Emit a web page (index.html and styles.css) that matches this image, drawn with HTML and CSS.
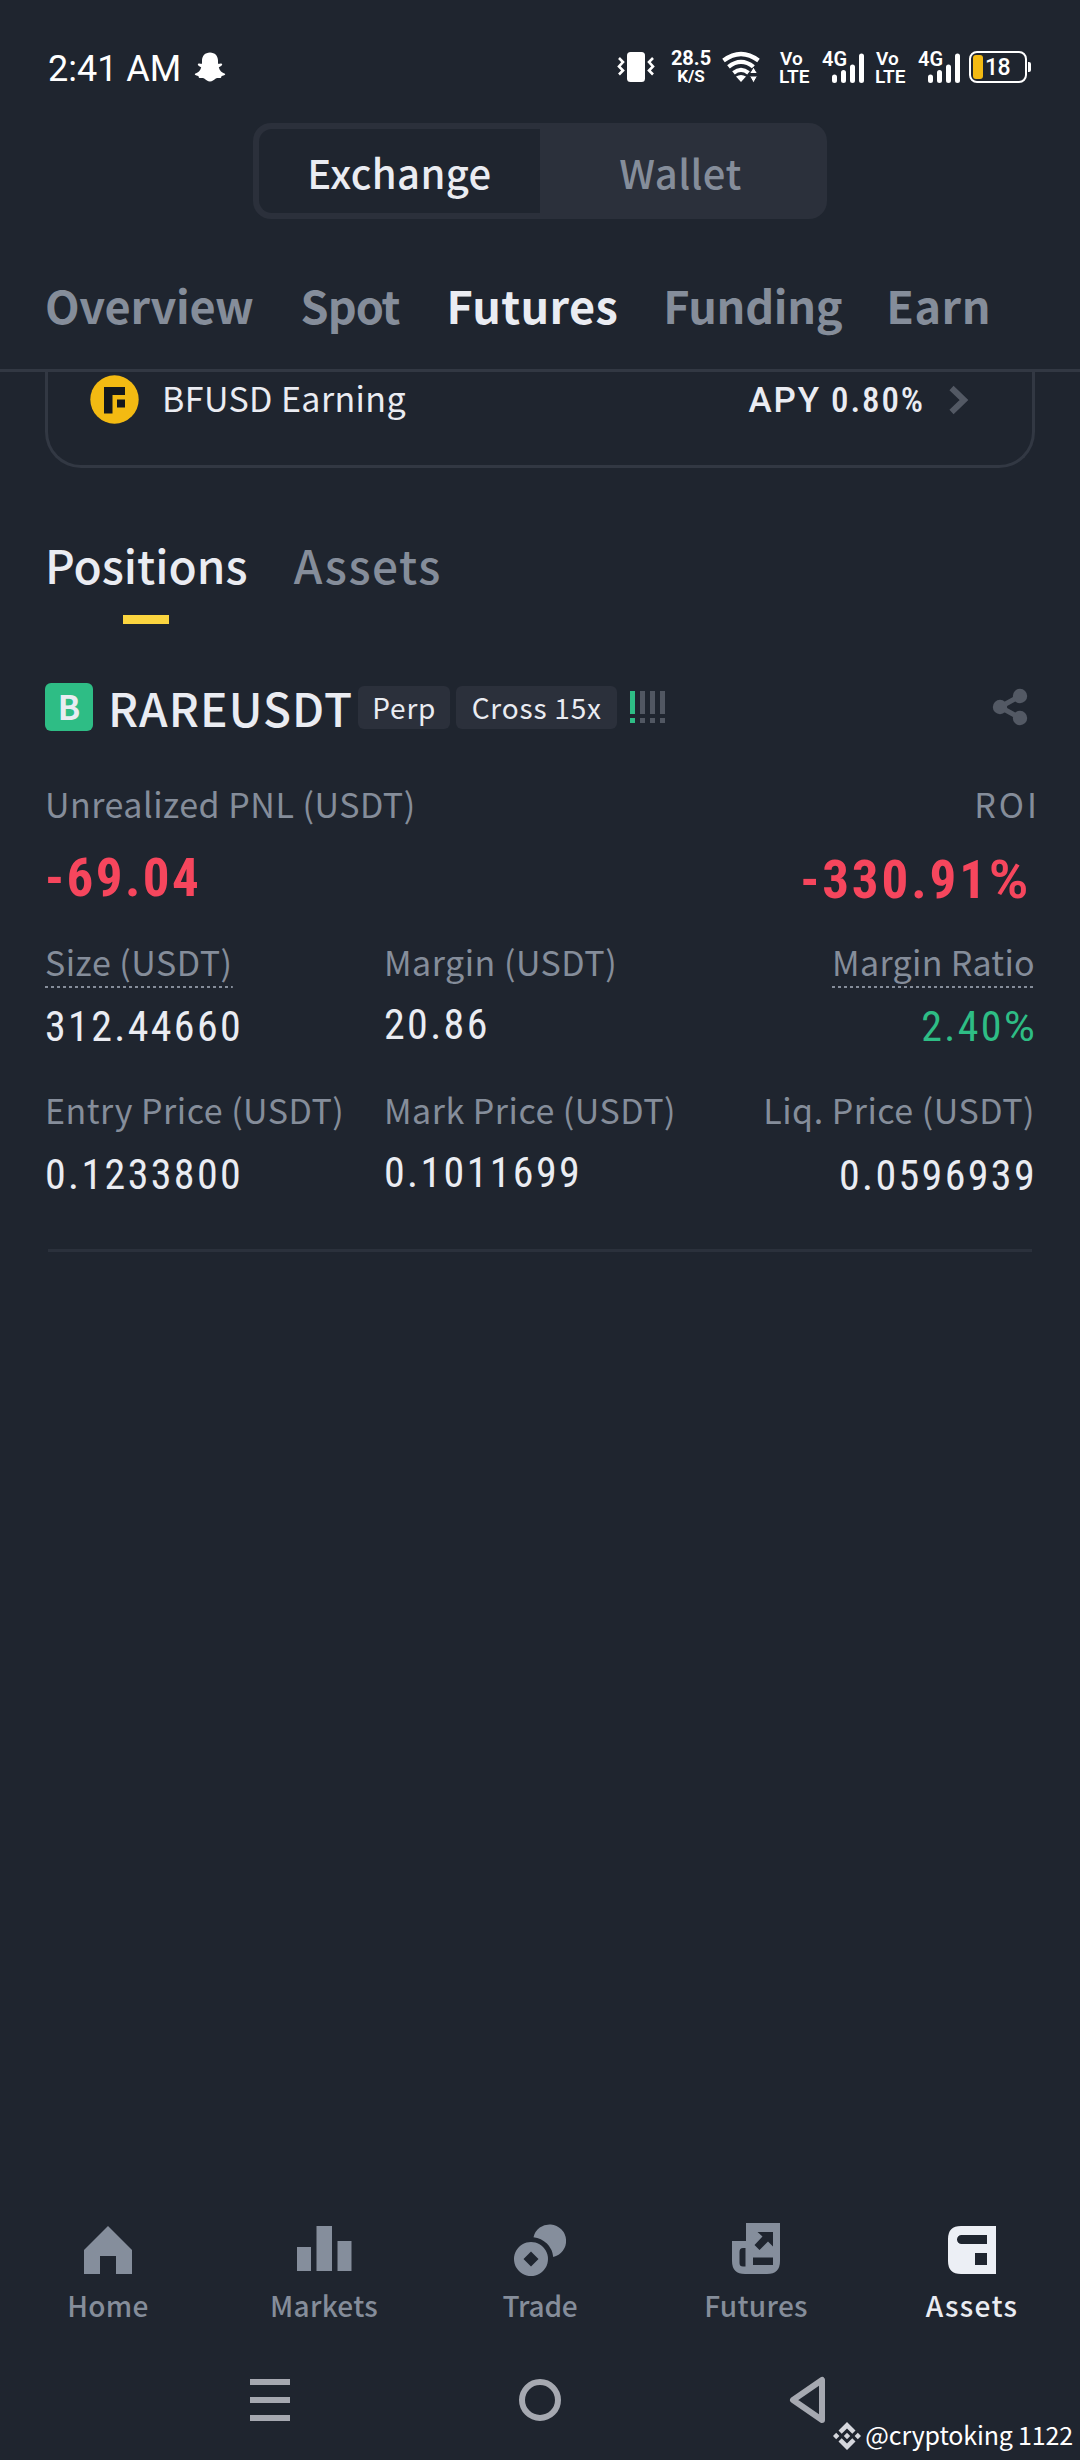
FILE: index.html
```html
<!DOCTYPE html>
<html lang="en">
<head>
<meta charset="utf-8">
<title>Assets – Futures</title>
<link rel="stylesheet" href="styles.css">
</head>
<body>
<div class="screen">
  <header class="header">
    <div class="status">
      <span class="clock">2:41 AM</span>
      <svg class="snap" width="32" height="30" viewBox="0 0 32 30"><path fill="#fff" d="M16 0.500c-5 0-8 3.600-8 8v3.200c-1.200.3-3-.8-4 .3c-.8 1.200 1.500 2.500 3.200 3.200c-.6 3.300-3.200 5.600-6.200 6.600c-.8.9.6 1.800 3.200 2.300c.8.600.3 1.800 1.400 2c1.600.1 3.200-.3 5 .7c1.600 1.100 3 2.700 5.400 2.700s3.800-1.600 5.400-2.700c1.800-1 3.400-.6 5-.7c1.100-.2.6-1.400 1.400-2c2.600-.5 4-1.400 3.200-2.300c-3-1-5.600-3.300-6.200-6.600c1.700-.7 4-2 3.200-3.200c-1-1.100-2.800 0-4-.3V8.500c0-4.400-3-8-8-8z"/></svg>
      <div class="status-right">
        <svg class="vib" width="38" height="32" viewBox="0 0 38 32"><rect x="10" y="1" width="18" height="30" rx="3.500" fill="#fff"/><path fill="none" stroke="#fff" stroke-width="2.600" d="M2 7l4 4-4 4.500 4 4-4 4M36 7l-4 4 4 4.500-4 4 4 4"/></svg>
        <div class="rate"><span class="rate-n">28.5</span><span class="rate-u">K/S</span></div>
        <svg class="wifi" width="38" height="32" viewBox="0 0 38 32"><g fill="none" stroke="#fff" stroke-width="4.200"><path d="M1.500 9.500Q19-3.500 36.500 9.500"/><path d="M6.500 15.800Q19 5.800 31.500 15.800"/><path d="M11.500 21.800Q19 15.800 26.500 21.800"/></g><path fill="#fff" d="M14 25.500q5-3 10 0l-5 5.500z"/><path fill="#fff" stroke="#1f252f" stroke-width="1" d="M31.500 16l4 6.500h-8zM31.500 32l4-7h-8z"/></svg>
        <div class="volte"><span>Vo</span><span class="lte">LTE</span></div>
        <div class="signal"><span class="g4">4G</span><svg width="42" height="32" viewBox="0 0 42 32"><path stroke="#fff" stroke-width="5" stroke-linecap="round" d="M12.500 26v3.500M21.500 21.500v8M30.500 16v13.500M39.500 5v24.500"/></svg></div>
        <div class="volte second"><span>Vo</span><span class="lte">LTE</span></div>
        <div class="signal"><span class="g4">4G</span><svg width="42" height="32" viewBox="0 0 42 32"><path stroke="#fff" stroke-width="5" stroke-linecap="round" d="M12.500 26v3.500M21.500 21.500v8M30.500 16v13.500M39.500 5v24.500"/></svg></div>
        <div class="battery"><i class="charge"></i><span>18</span></div><i class="nub"></i>
      </div>
    </div>
    <div class="segment"><span class="seg on">Exchange</span><span class="seg">Wallet</span></div>
    <nav class="tabs"><span>Overview</span><span class="spot">Spot</span><span class="futures on">Futures</span><span class="funding">Funding</span><span class="earn-tab">Earn</span></nav>
  </header>
  <main class="main">
    <section class="earn">
      <svg width="49" height="49" viewBox="0 0 49 49"><circle cx="24.500" cy="24.500" r="24.200" fill="#f3ba12"/><path fill="#15181c" d="M14 12h21v8H22.500v18.500H14zM27 24.500h8v8h-8z"/></svg>
      <span class="earn-name">BFUSD Earning</span>
      <span class="apy"><span class="apy-word">APY</span> 0.80%</span>
      <svg class="chev" width="20" height="30" viewBox="0 0 20 30"><path fill="none" stroke="#535964" stroke-width="6" d="M2.500 3l12.500 12-12.500 12"/></svg>
    </section>
    <nav class="subtabs"><span class="sub on">Positions</span><span class="sub">Assets</span></nav>
    <section class="position">
      <div class="pos-head">
        <span class="side">B</span>
        <span class="symbol">RAREUSDT</span>
        <span class="tag perp">Perp</span>
        <span class="tag cross">Cross 15x</span>
        <svg class="risk" width="35" height="32" viewBox="0 0 35 32"><path fill="#2ebd85" d="M0 0h5v23H0zM0 27h5v5H0z"/><path fill="#515762" d="M10 0h5v23h-5zM10 27h5v5h-5zM20 0h5v23h-5zM20 27h5v5h-5zM30 0h5v23h-5zM30 27h5v5h-5z"/></svg>
        <svg class="share" width="36" height="38" viewBox="0 0 36 38"><path fill="none" stroke="#535964" stroke-width="5" d="M28 8L8 19l20 11"/><g fill="#535964"><circle cx="28" cy="8" r="7.200"/><circle cx="8" cy="19" r="7.200"/><circle cx="28" cy="30" r="7.200"/></g></svg>
      </div>
      <div class="pnl">
        <div class="cell"><span class="label">Unrealized PNL (USDT)</span><span class="big">-69.04</span></div>
        <div class="cell right"><span class="label roi">ROI</span><span class="big pct">-330.91<span class="unit">%</span></span></div>
      </div>
      <div class="grid">
        <div class="cell"><span class="label dotted">Size (USDT)</span><span class="value">312.44660</span></div>
        <div class="cell"><span class="label">Margin (USDT)</span><span class="value mid">20.86</span></div>
        <div class="cell right"><span class="label dotted ratio">Margin Ratio</span><span class="value green">2.40<span class="unit">%</span></span></div>
      </div>
      <div class="grid second-row">
        <div class="cell"><span class="label">Entry Price (USDT)</span><span class="value">0.1233800</span></div>
        <div class="cell"><span class="label">Mark Price (USDT)</span><span class="value mid">0.1011699</span></div>
        <div class="cell right"><span class="label">Liq. Price (USDT)</span><span class="value low">0.0596939</span></div>
      </div>
    </section>
  </main>
  <footer class="footer">
    <nav class="tabbar">
      <div class="item"><svg width="54" height="54" viewBox="0 0 54 54"><path fill="#858e9c" d="M27 3l24 24v24H35V33H19v18H3V27z"/></svg><span>Home</span></div>
      <div class="item"><svg width="54" height="54" viewBox="0 0 54 54"><path fill="#858e9c" d="M0 24h14v24H0zM19.500 3H35v45H19.500zM40.500 18h14v30h-14z"/></svg><span>Markets</span></div>
      <div class="item"><svg width="54" height="54" viewBox="0 0 54 54"><path fill="#858e9c" fill-rule="evenodd" d="M18 19a17 17 0 1 1-.01 0zM18 28.500l-7.500 7.500 7.500 7.500 7.500-7.500z"/><path fill="#858e9c" d="M20.500 14.200A16.500 16.500 0 1 1 40.200 34A22 22 0 0 0 20.500 14.200z"/></svg><span class="trade">Trade</span></div>
      <div class="item"><svg width="54" height="54" viewBox="0 0 54 54"><path fill="#858e9c" fill-rule="evenodd" d="M17 0h34v38q0 13-13 13H16Q3 51 3 38V18h14zM16.500 25H14q-3.500 0-3.500 4v11q0 3.500 3.500 3.500h2.500zM24 34.500V42h20v-7.500zM28.500 9l5 4.500-8 8.500 5 5 8.500-8.500 5 5V9z"/></svg><span>Futures</span></div>
      <div class="item on"><svg width="54" height="54" viewBox="0 0 54 54"><path fill="#eceff5" fill-rule="evenodd" d="M16 3h35v48H16Q3 51 3 38V16Q3 3 16 3zM16.500 12a4.500 4.500 0 0 0 0 9H42v-9zM30 30v12h12V30z"/></svg><span>Assets</span></div>
    </nav>
    <nav class="sysnav">
      <svg width="60" height="60" viewBox="0 0 60 60"><path fill="none" stroke="#a6a9b1" stroke-width="6" d="M10 12h40M10 30h40M10 48h40"/></svg>
      <svg width="60" height="60" viewBox="0 0 60 60"><circle cx="30" cy="30" r="18" fill="none" stroke="#a6a9b1" stroke-width="6"/></svg>
      <svg width="60" height="60" viewBox="0 0 60 60"><path fill="none" stroke="#a6a9b1" stroke-width="6" stroke-linejoin="round" d="M42 10v40L13 30z"/></svg>
    </nav>
  </footer>
  <div class="credit">
    <svg width="28" height="28" viewBox="0 0 28 28"><g fill="#d5d7dd"><path d="M14 0l8.500 8.500-3.200 3.200L14 6.400l-5.300 5.300-3.200-3.200zM14 28l-8.500-8.500 3.200-3.200 5.300 5.300 5.300-5.300 3.200 3.200zM14 10.800l3.200 3.200-3.200 3.200-3.200-3.200zM3.200 10.800L6.400 14l-3.200 3.200L0 14zM24.800 10.800L28 14l-3.200 3.200-3.200-3.200z"/></g></svg>
    <span>@cryptoking 1122</span>
  </div>
</div>
</body>
</html>
```
FILE: styles.css
```css
* { box-sizing: border-box; }

body {
  margin: 0;
  background: #1f252f;
  color: #eaecf2;
  font-family: "Noto Sans CJK SC", "Noto Sans", sans-serif;
}

.screen {
  position: relative;
  display: flex;
  flex-direction: column;
  width: 1080px;
  height: 2460px;
  overflow: hidden;
}

svg { display: block; flex: none; }
span { white-space: nowrap; }

/* Status bar */
.header { border-bottom: 3px solid #323843; }
.status {
  display: flex;
  align-items: center;
  height: 123px;
  padding: 11px 49px 0 48px;
  color: #fff;
  font-family: Roboto, sans-serif;
}
.clock { padding-top: 4px; font-size: 36px; line-height: 40px; }
.snap { margin-left: 13px; }
.status-right { display: flex; align-items: center; margin-left: auto; }
.rate { display: flex; flex-direction: column; align-items: center; width: 40px; margin-left: 16px; font-weight: 700; }
.rate-n { font-size: 20px; line-height: 17px; }
.rate-u { font-size: 17px; line-height: 18px; }
.wifi { margin-left: 11px; }
.volte { display: flex; flex-direction: column; width: 30px; margin-left: 20px; padding-top: 2px; font-size: 19px; line-height: 18px; font-weight: 600; }
.volte.second { margin-left: 12px; }
.lte { margin-left: -1px; }
.signal { display: flex; position: relative; width: 42px; margin-left: 12px; }
.g4 { position: absolute; left: 0; top: 0; font-size: 20px; line-height: 16px; font-weight: 600; }
.battery {
  display: flex;
  align-items: center;
  width: 58px;
  height: 32px;
  margin-left: 9px;
  padding-left: 2px;
  border: 2.500px solid #fff;
  border-radius: 8px;
  font-size: 23px;
  font-weight: 500;
  letter-spacing: -0.500px;
}
.charge { width: 10px; height: 24px; margin-right: 2px; border-radius: 3px; background: #f3ba12; }
.nub { width: 3px; height: 10px; margin-left: 1px; border-radius: 0 2px 2px 0; background: #fff; }

/* Exchange / Wallet switch */
.segment {
  display: flex;
  width: 574px;
  height: 96px;
  margin: 0 auto;
  padding: 6px;
  border-radius: 18px;
  background: #2b303b;
}
.seg { flex: 1; text-align: center; font-size: 40px; line-height: 87px; font-weight: 500; letter-spacing: 0.400px; color: #858d9a; }
.seg.on { border-radius: 13px 0 0 13px; background: #1f252f; color: #eaecf2; }

/* Account tabs */
.tabs {
  display: flex;
  gap: 47px;
  height: 150px;
  padding: 20px 0 0 45px;
  color: #858d9a;
  font-size: 45px;
  line-height: 132px;
  font-weight: 700;
  letter-spacing: -0.300px;
}
.tabs .on { color: #eaecf2; }
.spot { letter-spacing: -1px; }
.futures { letter-spacing: 0.350px; }
.funding { margin-left: -2px; }
.earn-tab { margin-left: -3px; letter-spacing: 0.500px; }

.main { flex: 1; padding: 0 45px; }

.earn {
  display: flex;
  align-items: center;
  height: 96px;
  padding: 0 63px 38px 42px;
  border: 3px solid #323843;
  border-top: 0;
  border-radius: 0 0 36px 36px;
}
.earn-name { margin: -3px 0 0 23px; font-size: 34px; line-height: 50px; letter-spacing: 0.400px; }
.apy { margin: 3px 0 0 auto; font: 500 35px/50px Roboto, sans-serif; font-stretch: 87.5%; letter-spacing: 1.900px; }
.apy-word { font-stretch: 100%; }
.chev { margin-left: 24px; }

.subtabs { display: flex; gap: 46px; padding-top: 68px; font-size: 46px; line-height: 56px; font-weight: 500; }
.sub { color: #858d9a; }
.sub:last-child { letter-spacing: 1.500px; }
.sub.on { color: #eaecf2; }
.sub.on::after { content: ""; display: block; width: 46px; height: 9px; margin: 23px auto 0; background: #fbd53f; }

/* Position card */
.position { border-bottom: 3px solid #2b313c; margin: 0 3px; }
.pos-head, .pnl, .grid { margin-left: -3px; margin-right: -3px; }
.pos-head { display: flex; align-items: center; height: 48px; margin-top: 59px; }
.side { width: 48px; height: 48px; border-radius: 6px; background: #2ebd85; text-align: center; font-size: 33px; line-height: 47px; font-weight: 700; }
.symbol { margin-left: 15px; font-size: 46px; line-height: 48px; font-weight: 500; letter-spacing: 1.100px; }
.tag { height: 43px; border-radius: 6px; background: #2b303b; text-align: center; font-size: 28px; line-height: 43px; letter-spacing: 0.800px; }
.perp { width: 92px; margin-left: 5px; }
.cross { width: 161px; margin-left: 6px; }
.risk { margin-left: 13px; }
.share { margin-left: auto; margin-right: 7px; }

.pnl { display: flex; justify-content: space-between; margin-top: 53px; }
.cell { display: flex; flex-direction: column; align-items: flex-start; }
.cell.right { align-items: flex-end; }
.label { color: #858d9a; font-size: 34px; line-height: 40px; letter-spacing: 0.500px; }
.roi { margin-right: -5px; letter-spacing: 3px; }
.big { margin-top: 24px; color: #f6465d; font: 700 53px/60px Roboto, sans-serif; font-stretch: 87.5%; letter-spacing: 2.400px; }
.pct { margin: 26px 4px -2px 0; letter-spacing: 2.900px; }
.unit { font-stretch: 100%; }
.grid { display: grid; grid-template-columns: 339px 1fr auto; margin-top: 34px; }
.dotted { height: 46px; margin-bottom: -6px; background: repeating-linear-gradient(90deg, #858d9a 0 3px, transparent 3px 6px) bottom / 100% 2px no-repeat; }
.ratio { letter-spacing: 0.300px; }
.value { margin-top: 21px; font: 400 42px/48px Roboto, sans-serif; font-stretch: 87.5%; letter-spacing: 2.350px; }
.right .value { margin-right: -2px; }
.mid { margin-top: 19px; }
.low { margin-top: 22px; }
.green { color: #2ebd85; }
.second-row { margin-top: 39px; height: 159px; }

/* Bottom bars */
.tabbar { display: grid; grid-template-columns: repeat(5, 1fr); color: #858d9a; }
.item { display: flex; flex-direction: column; align-items: center; gap: 10px; font-size: 28px; line-height: 36px; font-weight: 500; letter-spacing: 0.300px; }
.item.on { color: #eaecf2; letter-spacing: 1.300px; }
.item svg { overflow: visible; }
.trade { letter-spacing: -0.200px; }
.sysnav { display: grid; grid-template-columns: repeat(3, 1fr); justify-items: center; margin: 47px 0 30px; padding: 0 135px; }

.credit { position: absolute; right: 7px; bottom: 0; display: flex; align-items: center; gap: 4px; height: 48px; color: #fff; font-size: 25px; line-height: 30px; }
.credit span { margin-top: -4px; letter-spacing: -0.160px; }
```
